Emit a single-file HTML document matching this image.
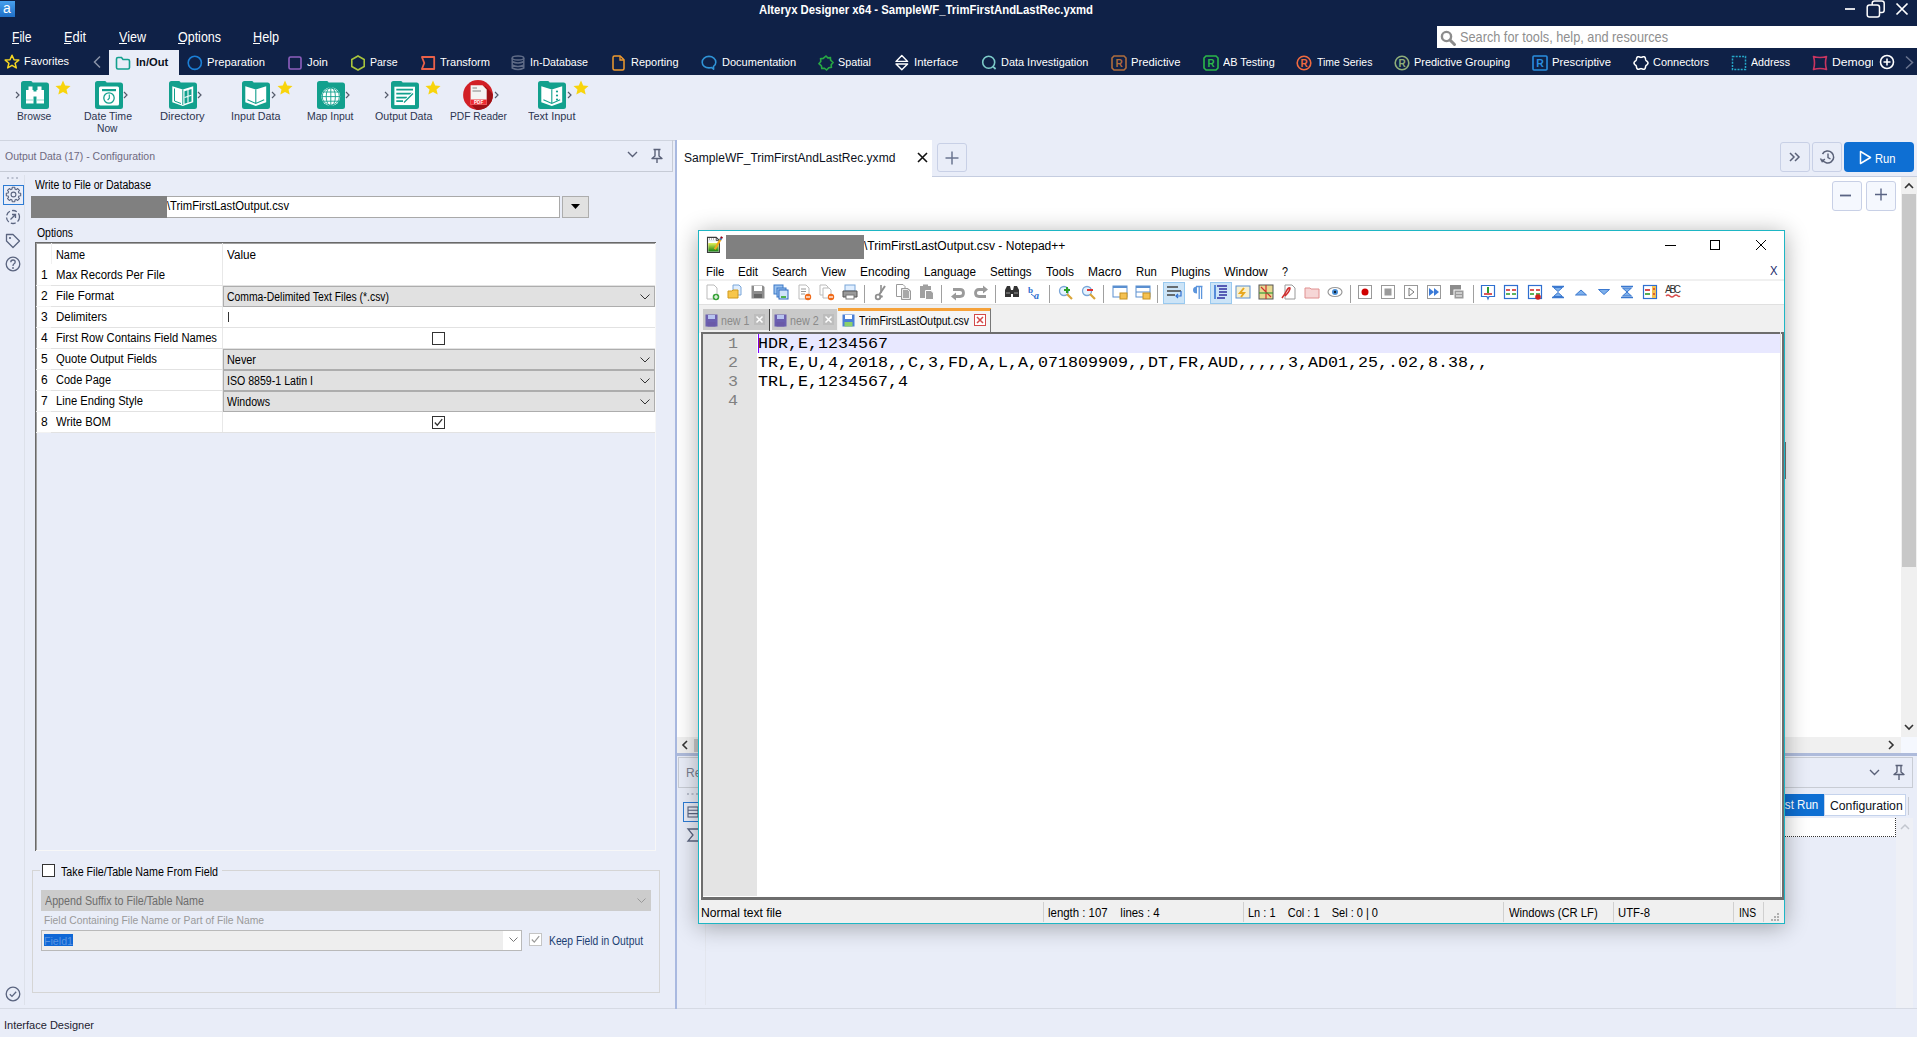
<!DOCTYPE html>
<html><head><meta charset="utf-8">
<style>
*{box-sizing:border-box;margin:0;padding:0}
html,body{width:1917px;height:1037px;overflow:hidden;background:#e9edf8;font-family:"Liberation Sans",sans-serif;font-size:12px;color:#000}
.a{position:absolute}
.t{position:absolute;white-space:pre;line-height:1}
svg{position:absolute;overflow:visible}
</style></head><body>
<div class="a" style="left:0px;top:0px;width:1917px;height:75px;background:#0f2147;"></div>
<div class="a" style="left:0px;top:1px;width:15px;height:16px;background:#2e84d8;background:linear-gradient(#47a0ee,#1f6fc6)"></div>
<div class="t" style="left:3px;top:1.15px;font-size:14px;color:#fff;font-weight:normal;font-family:'Liberation Sans',sans-serif;">a</div>
<div class="t" style="left:759px;top:3.00px;font-size:13px;color:#fff;font-weight:bold;font-family:'Liberation Sans',sans-serif;transform:scaleX(0.8723);transform-origin:0 0;">Alteryx Designer x64 - SampleWF_TrimFirstAndLastRec.yxmd</div>
<svg style="left:1843px;top:2px;" width="14" height="14" viewBox="0 0 14 14"><path d="M2 7H12" stroke="#fff" stroke-width="1.7"/></svg>
<svg style="left:1866px;top:0px;" width="20" height="20" viewBox="0 0 20 20"><rect x="1.2" y="5" width="12.3" height="12" rx="2.3" fill="none" stroke="#fff" stroke-width="1.5"/><path d="M6.2 5V3.3Q6.2 1 8.5 1H15.8Q18.2 1 18.2 3.3V10.2Q18.2 12.5 15.8 12.5H13.5" fill="none" stroke="#fff" stroke-width="1.5"/></svg>
<svg style="left:1895px;top:2px;" width="14" height="14" viewBox="0 0 14 14"><path d="M1.5 1.5L12.5 12.5M12.5 1.5L1.5 12.5" stroke="#fff" stroke-width="1.7"/></svg>
<div class="t" style="left:12px;top:30.15px;font-size:14px;color:#fff;font-weight:normal;font-family:'Liberation Sans',sans-serif;transform:scaleX(0.8643);transform-origin:0 0;">File</div>
<div class="a" style="left:12px;top:43px;width:7px;height:1px;background:#fff;"></div>
<div class="t" style="left:64px;top:30.15px;font-size:14px;color:#fff;font-weight:normal;font-family:'Liberation Sans',sans-serif;transform:scaleX(0.9202);transform-origin:0 0;">Edit</div>
<div class="a" style="left:64px;top:43px;width:7px;height:1px;background:#fff;"></div>
<div class="t" style="left:119px;top:30.15px;font-size:14px;color:#fff;font-weight:normal;font-family:'Liberation Sans',sans-serif;transform:scaleX(0.8972);transform-origin:0 0;">View</div>
<div class="a" style="left:119px;top:43px;width:8px;height:1px;background:#fff;"></div>
<div class="t" style="left:178px;top:30.15px;font-size:14px;color:#fff;font-weight:normal;font-family:'Liberation Sans',sans-serif;transform:scaleX(0.8912);transform-origin:0 0;">Options</div>
<div class="a" style="left:178px;top:43px;width:7px;height:1px;background:#fff;"></div>
<div class="t" style="left:253px;top:30.15px;font-size:14px;color:#fff;font-weight:normal;font-family:'Liberation Sans',sans-serif;transform:scaleX(0.9029);transform-origin:0 0;">Help</div>
<div class="a" style="left:253px;top:43px;width:7px;height:1px;background:#fff;"></div>
<div class="a" style="left:1437px;top:26px;width:480px;height:22px;background:#fff;"></div>
<svg style="left:1440px;top:30px;" width="17" height="16" viewBox="0 0 17 16"><circle cx="6.5" cy="6.5" r="4.6" fill="none" stroke="#8c8c8c" stroke-width="2.4"/><path d="M10 10L14.5 14.5" stroke="#8c8c8c" stroke-width="3" stroke-linecap="round"/></svg>
<div class="t" style="left:1460px;top:29.93px;font-size:14.5px;color:#8f8f8f;font-weight:normal;font-family:'Liberation Sans',sans-serif;transform:scaleX(0.8778);transform-origin:0 0;">Search for tools, help, and resources</div>
<div class="a" style="left:109px;top:50px;width:70px;height:25px;background:#e9edf8;"></div>
<div class="t" style="left:24px;top:56.07px;font-size:11.5px;color:#fff;font-weight:normal;font-family:'Liberation Sans',sans-serif;transform:scaleX(0.9514);transform-origin:0 0;">Favorites</div>
<div class="t" style="left:207px;top:57.07px;font-size:11.5px;color:#fff;font-weight:normal;font-family:'Liberation Sans',sans-serif;transform:scaleX(0.9753);transform-origin:0 0;">Preparation</div>
<div class="t" style="left:307px;top:57.07px;font-size:11.5px;color:#fff;font-weight:normal;font-family:'Liberation Sans',sans-serif;transform:scaleX(0.9948);transform-origin:0 0;">Join</div>
<div class="t" style="left:370px;top:57.07px;font-size:11.5px;color:#fff;font-weight:normal;font-family:'Liberation Sans',sans-serif;transform:scaleX(0.9152);transform-origin:0 0;">Parse</div>
<div class="t" style="left:440px;top:57.07px;font-size:11.5px;color:#fff;font-weight:normal;font-family:'Liberation Sans',sans-serif;transform:scaleX(0.9618);transform-origin:0 0;">Transform</div>
<div class="t" style="left:530px;top:57.07px;font-size:11.5px;color:#fff;font-weight:normal;font-family:'Liberation Sans',sans-serif;transform:scaleX(0.9257);transform-origin:0 0;">In-Database</div>
<div class="t" style="left:631px;top:57.07px;font-size:11.5px;color:#fff;font-weight:normal;font-family:'Liberation Sans',sans-serif;transform:scaleX(0.9524);transform-origin:0 0;">Reporting</div>
<div class="t" style="left:721.5px;top:57.07px;font-size:11.5px;color:#fff;font-weight:normal;font-family:'Liberation Sans',sans-serif;transform:scaleX(0.9579);transform-origin:0 0;">Documentation</div>
<div class="t" style="left:838px;top:57.07px;font-size:11.5px;color:#fff;font-weight:normal;font-family:'Liberation Sans',sans-serif;transform:scaleX(0.9382);transform-origin:0 0;">Spatial</div>
<div class="t" style="left:914.3px;top:57.07px;font-size:11.5px;color:#fff;font-weight:normal;font-family:'Liberation Sans',sans-serif;transform:scaleX(0.9855);transform-origin:0 0;">Interface</div>
<div class="t" style="left:1001.4px;top:57.07px;font-size:11.5px;color:#fff;font-weight:normal;font-family:'Liberation Sans',sans-serif;transform:scaleX(0.9494);transform-origin:0 0;">Data Investigation</div>
<div class="t" style="left:1131px;top:57.07px;font-size:11.5px;color:#fff;font-weight:normal;font-family:'Liberation Sans',sans-serif;transform:scaleX(0.9782);transform-origin:0 0;">Predictive</div>
<div class="t" style="left:1223px;top:57.07px;font-size:11.5px;color:#fff;font-weight:normal;font-family:'Liberation Sans',sans-serif;transform:scaleX(0.9440);transform-origin:0 0;">AB Testing</div>
<div class="t" style="left:1316.6px;top:57.07px;font-size:11.5px;color:#fff;font-weight:normal;font-family:'Liberation Sans',sans-serif;transform:scaleX(0.9094);transform-origin:0 0;">Time Series</div>
<div class="t" style="left:1414px;top:57.07px;font-size:11.5px;color:#fff;font-weight:normal;font-family:'Liberation Sans',sans-serif;transform:scaleX(0.9505);transform-origin:0 0;">Predictive Grouping</div>
<div class="t" style="left:1552px;top:57.07px;font-size:11.5px;color:#fff;font-weight:normal;font-family:'Liberation Sans',sans-serif;transform:scaleX(0.9821);transform-origin:0 0;">Prescriptive</div>
<div class="t" style="left:1653px;top:57.07px;font-size:11.5px;color:#fff;font-weight:normal;font-family:'Liberation Sans',sans-serif;transform:scaleX(0.9522);transform-origin:0 0;">Connectors</div>
<div class="t" style="left:1751px;top:57.07px;font-size:11.5px;color:#fff;font-weight:normal;font-family:'Liberation Sans',sans-serif;transform:scaleX(0.9244);transform-origin:0 0;">Address</div>
<div class="t" style="left:1832px;top:57.07px;font-size:11.5px;color:#fff;font-weight:normal;font-family:'Liberation Sans',sans-serif;transform:scaleX(1.0568);transform-origin:0 0;">Demogra</div>
<div class="a" style="left:1873px;top:50px;width:44px;height:25px;background:#0f2147;"></div>
<div class="t" style="left:136px;top:56.87px;font-size:11.5px;color:#0b1020;font-weight:bold;font-family:'Liberation Sans',sans-serif;transform:scaleX(0.9693);transform-origin:0 0;">In/Out</div>
<svg style="left:4px;top:54px;" width="16" height="15" viewBox="0 0 16 15"><path d="M8 1.2L10 5.8L14.8 6.1L11.1 9.2L12.3 13.9L8 11.3L3.7 13.9L4.9 9.2L1.2 6.1L6 5.8Z" fill="none" stroke="#f5d622" stroke-width="1.5" stroke-linejoin="round"/></svg>
<svg style="left:92px;top:55px;" width="10" height="14" viewBox="0 0 10 14"><path d="M8 1.5L2.5 7L8 12.5" fill="none" stroke="#8a93a8" stroke-width="1.5"/></svg>
<svg style="left:115px;top:56px;" width="16" height="14" viewBox="0 0 16 14"><path d="M1.5 3Q1.5 1.5 3 1.5H6.5L8 3.5H13Q14.5 3.5 14.5 5V11.5Q14.5 13 13 13H3Q1.5 13 1.5 11.5Z" fill="none" stroke="#13a08e" stroke-width="1.6"/></svg>
<svg style="left:187px;top:55px;" width="16" height="16" viewBox="0 0 16 16"><circle cx="7.8" cy="7.8" r="6.6" fill="none" stroke="#1b7fd6" stroke-width="1.6"/></svg>
<svg style="left:288px;top:56px;" width="14" height="14" viewBox="0 0 14 14"><rect x="1" y="1" width="12" height="12" rx="1.5" fill="none" stroke="#8f5fbf" stroke-width="1.6"/></svg>
<svg style="left:350px;top:55px;" width="16" height="16" viewBox="0 0 16 16"><path d="M8 1L14.2 4.5V11.5L8 15L1.8 11.5V4.5Z" fill="none" stroke="#a8c43c" stroke-width="1.6"/></svg>
<svg style="left:420px;top:56px;" width="16" height="15" viewBox="0 0 16 15"><path d="M1.9 1H14.2V13H1.9L4.3 7Z" fill="none" stroke="#ea6149" stroke-width="1.8" stroke-linejoin="round"/></svg>
<svg style="left:511px;top:55px;" width="14" height="16" viewBox="0 0 14 16"><ellipse cx="7" cy="3" rx="5.8" ry="2" fill="none" stroke="#5f6b86" stroke-width="1.5"/><path d="M1.2 3V13Q7 16 12.8 13V3M1.2 6.5Q7 9.5 12.8 6.5M1.2 10Q7 13 12.8 10" fill="none" stroke="#5f6b86" stroke-width="1.5"/></svg>
<svg style="left:612px;top:55px;" width="13" height="16" viewBox="0 0 13 16"><path d="M2.5 1H8.2L12 4.8V13.5Q12 15 10.5 15H2.5Q1 15 1 13.5V2.5Q1 1 2.5 1Z" fill="none" stroke="#f09a2e" stroke-width="1.5" stroke-linejoin="round"/><path d="M8 1.2V5H11.8" fill="none" stroke="#f09a2e" stroke-width="1.3"/></svg>
<svg style="left:701px;top:55px;" width="16" height="16" viewBox="0 0 16 16"><path d="M12.5 11.3C14.2 10.2 14.8 8.7 14.8 7.2C14.8 3.9 11.8 1.4 8 1.4S1.2 3.9 1.2 7.2S4.2 12.9 8 12.9C9 12.9 9.9 12.8 10.6 12.5L12.6 14.2Z" fill="none" stroke="#2f93d6" stroke-width="1.6" stroke-linejoin="round"/></svg>
<svg style="left:818px;top:55px;" width="16" height="16" viewBox="0 0 16 16"><path d="M8 1L9.8 2.8L12.4 2.6L12.6 5.2L15 7.5L13.2 9.8L13.4 12.4L10.8 12.8L8.6 15L6.4 13.2L3.8 13.4L3.4 10.8L1 8.6L2.8 6.4L2.6 3.8L5.2 3.4Z" fill="none" stroke="#27a744" stroke-width="1.6"/></svg>
<svg style="left:890px;top:50px;" width="24" height="24" viewBox="0 0 24 24"><path d="M11.8 5.6L17.6 11.4H6Z M6 14H17.6L11.8 19.8Z" fill="none" stroke="#fff" stroke-width="1.4" stroke-linejoin="round"/></svg>
<svg style="left:980px;top:50px;" width="24" height="24" viewBox="0 0 24 24"><circle cx="8.7" cy="12.3" r="6" fill="none" stroke="#7ccbc9" stroke-width="1.6"/><path d="M13 16.6L15.6 19" stroke="#7ccbc9" stroke-width="1.8"/></svg>
<svg style="left:1111px;top:55px;" width="16" height="16" viewBox="0 0 16 16"><path d="M3 1H13L15 3V13L13 15H3L1 13V3Z" fill="none" stroke="#b06d3e" stroke-width="1.6"/><text x="8" y="11.8" font-size="10" font-weight="bold" fill="#b06d3e" text-anchor="middle" font-family="Liberation Sans">R</text></svg>
<svg style="left:1203px;top:55px;" width="16" height="16" viewBox="0 0 16 16"><path d="M3 1H13L15 3V13L13 15H3L1 13V3Z" fill="none" stroke="#2bb84a" stroke-width="1.6"/><text x="8" y="11.8" font-size="10" font-weight="bold" fill="#2bb84a" text-anchor="middle" font-family="Liberation Sans">R</text></svg>
<svg style="left:1296px;top:55px;" width="16" height="16" viewBox="0 0 16 16"><circle cx="8" cy="8" r="6.8" fill="none" stroke="#f06a3f" stroke-width="1.6"/><text x="8" y="11.8" font-size="10" font-weight="bold" fill="#f06a3f" text-anchor="middle" font-family="Liberation Sans">R</text></svg>
<svg style="left:1394px;top:55px;" width="16" height="16" viewBox="0 0 16 16"><circle cx="8" cy="8" r="6.8" fill="none" stroke="#8fae7a" stroke-width="1.6"/><text x="8" y="11.8" font-size="10" font-weight="bold" fill="#8fae7a" text-anchor="middle" font-family="Liberation Sans">R</text></svg>
<svg style="left:1532px;top:55px;" width="16" height="16" viewBox="0 0 16 16"><rect x="1" y="1" width="14" height="14" rx="1" fill="none" stroke="#2a8ee0" stroke-width="1.6"/><text x="8" y="12" font-size="10.5" font-weight="bold" fill="#2a8ee0" text-anchor="middle" font-family="Liberation Sans">R</text></svg>
<svg style="left:1633px;top:55px;" width="16" height="16" viewBox="0 0 16 16"><path d="M15.00 8.00 L14.96 8.36 L14.83 8.72 L14.63 9.05 L14.37 9.35 L14.09 9.63 L13.79 9.88 L13.50 10.11 L13.24 10.33 L13.02 10.56 L12.85 10.80 L12.73 11.07 L12.64 11.37 L12.58 11.71 L12.52 12.07 L12.45 12.45 L12.36 12.84 L12.22 13.22 L12.04 13.55 L11.79 13.84 L11.50 14.06 L11.16 14.21 L10.79 14.27 L10.41 14.27 L10.01 14.20 L9.63 14.09 L9.26 13.95 L8.92 13.82 L8.60 13.70 L8.29 13.63 L8.00 13.60 L7.71 13.63 L7.40 13.70 L7.08 13.82 L6.74 13.95 L6.37 14.09 L5.99 14.20 L5.59 14.27 L5.21 14.27 L4.84 14.21 L4.50 14.06 L4.21 13.84 L3.96 13.55 L3.78 13.22 L3.64 12.84 L3.55 12.45 L3.48 12.07 L3.42 11.71 L3.36 11.37 L3.27 11.07 L3.15 10.80 L2.98 10.56 L2.76 10.33 L2.50 10.11 L2.21 9.88 L1.91 9.63 L1.63 9.35 L1.37 9.05 L1.17 8.72 L1.04 8.36 L1.00 8.00 L1.04 7.64 L1.17 7.28 L1.37 6.95 L1.63 6.65 L1.91 6.37 L2.21 6.12 L2.50 5.89 L2.76 5.67 L2.98 5.44 L3.15 5.20 L3.27 4.93 L3.36 4.63 L3.42 4.29 L3.48 3.93 L3.55 3.55 L3.64 3.16 L3.78 2.78 L3.96 2.45 L4.21 2.16 L4.50 1.94 L4.84 1.79 L5.21 1.73 L5.59 1.73 L5.99 1.80 L6.37 1.91 L6.74 2.05 L7.08 2.18 L7.40 2.30 L7.71 2.37 L8.00 2.40 L8.29 2.37 L8.60 2.30 L8.92 2.18 L9.26 2.05 L9.63 1.91 L10.01 1.80 L10.41 1.73 L10.79 1.73 L11.16 1.79 L11.50 1.94 L11.79 2.16 L12.04 2.45 L12.22 2.78 L12.36 3.16 L12.45 3.55 L12.52 3.93 L12.58 4.29 L12.64 4.63 L12.73 4.93 L12.85 5.20 L13.02 5.44 L13.24 5.67 L13.50 5.89 L13.79 6.12 L14.09 6.37 L14.37 6.65 L14.63 6.95 L14.83 7.28 L14.96 7.64 L15.00 8.00Z" fill="none" stroke="#fff" stroke-width="1.5"/></svg>
<svg style="left:1731px;top:55px;" width="16" height="16" viewBox="0 0 16 16"><rect x="1.5" y="1.5" width="13" height="13" fill="none" stroke="#25a9c9" stroke-width="1.5" stroke-dasharray="2 1.2"/></svg>
<svg style="left:1812px;top:55px;" width="16" height="16" viewBox="0 0 16 16"><path d="M1.5 1.5Q8 3.5 14.5 1.5Q12.5 8 14.5 14.5Q8 12.5 1.5 14.5Q3.5 8 1.5 1.5Z" fill="none" stroke="#c93560" stroke-width="1.6" stroke-linejoin="round"/></svg>
<svg style="left:1879px;top:54px;" width="16" height="16" viewBox="0 0 16 16"><circle cx="8" cy="8" r="6.5" fill="none" stroke="#fff" stroke-width="1.6"/><path d="M8 4.5V11.5M4.5 8H11.5" stroke="#fff" stroke-width="1.6"/></svg>
<svg style="left:1904px;top:55px;" width="12" height="15" viewBox="0 0 12 15"><path d="M2 1.5L8.5 7.5L2 13.5" fill="none" stroke="#6b7590" stroke-width="1.5"/></svg>
<div class="a" style="left:0px;top:75px;width:1917px;height:65px;background:#e9edf8;"></div>
<svg style="left:21px;top:81px;" width="28" height="28" viewBox="0 0 28 28"><path d="M0 2.5Q0 0 2.5 0H10Q11.2 0 11.6 1.5H25.5Q28 1.5 28 4V25.5Q28 28 25.5 28H2.5Q0 28 0 25.5Z" fill="#12a08d"/><path d="M7.5 5.5H11.5V9H12.5V22.5H5V9H7.5Z" fill="#fff"/><path d="M16.5 5.5H20.5V9H23V22.5H15.5V9H16.5Z" fill="#fff"/><rect x="12" y="10.5" width="4" height="5" fill="#fff"/><path d="M5 19H12.5M15.5 19H23" stroke="#8fd6cb" stroke-width="1.2"/></svg>
<svg style="left:55px;top:80px;" width="16" height="16" viewBox="0 0 16 16"><path d="M8 0.5L10.2 5.4L15.5 5.9L11.5 9.4L12.7 14.6L8 11.9L3.3 14.6L4.5 9.4L0.5 5.9L5.8 5.4Z" fill="#f8d40c"/></svg>
<svg style="left:15px;top:91px;" width="5" height="8" viewBox="0 0 5 8"><path d="M1 1L4 4L1 7" fill="none" stroke="#545b6b" stroke-width="1.2"/></svg>
<svg style="left:95px;top:81px;" width="28" height="28" viewBox="0 0 28 28"><path d="M0 2.5Q0 0 2.5 0H10Q11.2 0 11.6 1.5H25.5Q28 1.5 28 4V25.5Q28 28 25.5 28H2.5Q0 28 0 25.5Z" fill="#12a08d"/><rect x="4" y="5.5" width="20" height="19" rx="1.5" fill="#fff"/><rect x="7" y="8" width="14" height="2.2" fill="#12a08d"/><circle cx="14" cy="17" r="5.2" fill="none" stroke="#12a08d" stroke-width="1.3"/><path d="M14.3 13.6V17.2L12.6 19.2" stroke="#12a08d" stroke-width="1.1" fill="none"/></svg>
<svg style="left:123px;top:91px;" width="5" height="8" viewBox="0 0 5 8"><path d="M1 1L4 4L1 7" fill="none" stroke="#545b6b" stroke-width="1.2"/></svg>
<svg style="left:169px;top:81px;" width="28" height="28" viewBox="0 0 28 28"><path d="M0 2.5Q0 0 2.5 0H10Q11.2 0 11.6 1.5H25.5Q28 1.5 28 4V25.5Q28 28 25.5 28H2.5Q0 28 0 25.5Z" fill="#12a08d"/><path d="M3.3 5.2L13.8 8.5L24.2 5.2V21.3L13.8 25L3.3 21.3Z" fill="#fff"/><path d="M13.8 8.5V24" stroke="#12a08d" stroke-width="1"/><path d="M5.5 7.5V20L12 22.5" stroke="#12a08d" stroke-width="1" fill="none"/><path d="M15.5 10.2L22.5 8V20.5L15.5 22.8Z" fill="#12a08d"/><path d="M19 9V21.8M15.5 16.4L22.5 14.2" stroke="#fff" stroke-width="1.1"/></svg>
<svg style="left:197px;top:91px;" width="5" height="8" viewBox="0 0 5 8"><path d="M1 1L4 4L1 7" fill="none" stroke="#545b6b" stroke-width="1.2"/></svg>
<svg style="left:242px;top:81px;" width="28" height="28" viewBox="0 0 28 28"><path d="M0 2.5Q0 0 2.5 0H10Q11.2 0 11.6 1.5H25.5Q28 1.5 28 4V25.5Q28 28 25.5 28H2.5Q0 28 0 25.5Z" fill="#12a08d"/><path d="M3.3 5.2L13.8 8.5L24.2 5.2V21.3L13.8 25L3.3 21.3Z" fill="#fff"/><path d="M13.8 8.5V23M5.4 18.8L13.8 22.4L22.2 18.8" stroke="#12a08d" stroke-width="1.1" fill="none"/></svg>
<svg style="left:271px;top:91px;" width="5" height="8" viewBox="0 0 5 8"><path d="M1 1L4 4L1 7" fill="none" stroke="#545b6b" stroke-width="1.2"/></svg>
<svg style="left:277px;top:80px;" width="16" height="16" viewBox="0 0 16 16"><path d="M8 0.5L10.2 5.4L15.5 5.9L11.5 9.4L12.7 14.6L8 11.9L3.3 14.6L4.5 9.4L0.5 5.9L5.8 5.4Z" fill="#f8d40c"/></svg>
<svg style="left:317px;top:81px;" width="28" height="28" viewBox="0 0 28 28"><path d="M0 2.5Q0 0 2.5 0H10Q11.2 0 11.6 1.5H25.5Q28 1.5 28 4V25.5Q28 28 25.5 28H2.5Q0 28 0 25.5Z" fill="#12a08d"/><circle cx="13.8" cy="15.6" r="9.4" fill="#fff"/><g stroke="#12a08d" stroke-width="0.9" fill="none"><path d="M4.4 15.6H23.2M13.8 6.2V25M5.6 11H22M5.6 20.2H22"/><ellipse cx="13.8" cy="15.6" rx="4.6" ry="9.4"/><circle cx="13.8" cy="15.6" r="8.6"/></g></svg>
<svg style="left:345px;top:91px;" width="5" height="8" viewBox="0 0 5 8"><path d="M1 1L4 4L1 7" fill="none" stroke="#545b6b" stroke-width="1.2"/></svg>
<svg style="left:391px;top:81px;" width="28" height="28" viewBox="0 0 28 28"><path d="M0 2.5Q0 0 2.5 0H10Q11.2 0 11.6 1.5H25.5Q28 1.5 28 4V25.5Q28 28 25.5 28H2.5Q0 28 0 25.5Z" fill="#12a08d"/><rect x="3.4" y="5.7" width="20.6" height="18.4" fill="#fff"/><path d="M5.3 8.6H22M5.3 12.6H21M5.3 16.6H16M5.3 20.1H12" stroke="#12a08d" stroke-width="1.8"/><path d="M13 21.5L22 12.5" stroke="#fff" stroke-width="3"/><path d="M13 21.5L22 12.5" stroke="#12a08d" stroke-width="1.2"/></svg>
<svg style="left:384px;top:91px;" width="5" height="8" viewBox="0 0 5 8"><path d="M1 1L4 4L1 7" fill="none" stroke="#545b6b" stroke-width="1.2"/></svg>
<svg style="left:425px;top:80px;" width="16" height="16" viewBox="0 0 16 16"><path d="M8 0.5L10.2 5.4L15.5 5.9L11.5 9.4L12.7 14.6L8 11.9L3.3 14.6L4.5 9.4L0.5 5.9L5.8 5.4Z" fill="#f8d40c"/></svg>
<svg style="left:463px;top:80px;" width="30" height="30" viewBox="0 0 30 30"><defs><clipPath id="pc"><circle cx="15" cy="15" r="14.9"/></clipPath></defs><circle cx="15" cy="15" r="14.9" fill="#d21f26"/><path d="M22 6L40 24L22 40L8 24Z" fill="#9e1015" clip-path="url(#pc)"/><path d="M7.6 5.2H19.5L23.7 9.4V24.7H7.6Z" fill="#f4f4f4"/><path d="M9.5 8H14M9.5 11H18" stroke="#777" stroke-width=".9"/><rect x="7.6" y="19.5" width="16.1" height="5.2" fill="#ef2a30"/><text x="15.6" y="23.8" font-size="4.6" font-weight="bold" fill="#fff" text-anchor="middle" font-family="Liberation Sans">PDF</text></svg>
<svg style="left:494px;top:91px;" width="5" height="8" viewBox="0 0 5 8"><path d="M1 1L4 4L1 7" fill="none" stroke="#545b6b" stroke-width="1.2"/></svg>
<svg style="left:538px;top:81px;" width="28" height="28" viewBox="0 0 28 28"><path d="M0 2.5Q0 0 2.5 0H10Q11.2 0 11.6 1.5H25.5Q28 1.5 28 4V25.5Q28 28 25.5 28H2.5Q0 28 0 25.5Z" fill="#12a08d"/><path d="M3.3 5.2L13.8 8.5L24.2 5.2V21.3L13.8 25L3.3 21.3Z" fill="#fff"/><path d="M13.8 8.5V23M5.4 18.8L13.8 22.4L22.2 18.8" stroke="#12a08d" stroke-width="1.1" fill="none"/><circle cx="19" cy="10.5" r="1.1" fill="#12a08d"/><circle cx="19" cy="14.5" r="1.1" fill="#12a08d"/><circle cx="19" cy="18.5" r="1.1" fill="#12a08d"/></svg>
<svg style="left:567px;top:91px;" width="5" height="8" viewBox="0 0 5 8"><path d="M1 1L4 4L1 7" fill="none" stroke="#545b6b" stroke-width="1.2"/></svg>
<svg style="left:573px;top:80px;" width="16" height="16" viewBox="0 0 16 16"><path d="M8 0.5L10.2 5.4L15.5 5.9L11.5 9.4L12.7 14.6L8 11.9L3.3 14.6L4.5 9.4L0.5 5.9L5.8 5.4Z" fill="#f8d40c"/></svg>
<div class="t" style="left:16.7px;top:110.77px;font-size:11.5px;color:#2d3550;font-weight:normal;font-family:'Liberation Sans',sans-serif;transform:scaleX(0.8942);transform-origin:0 0;">Browse</div>
<div class="t" style="left:159.6px;top:110.77px;font-size:11.5px;color:#2d3550;font-weight:normal;font-family:'Liberation Sans',sans-serif;transform:scaleX(0.9714);transform-origin:0 0;">Directory</div>
<div class="t" style="left:231px;top:110.77px;font-size:11.5px;color:#2d3550;font-weight:normal;font-family:'Liberation Sans',sans-serif;transform:scaleX(0.9326);transform-origin:0 0;">Input Data</div>
<div class="t" style="left:306.5px;top:110.77px;font-size:11.5px;color:#2d3550;font-weight:normal;font-family:'Liberation Sans',sans-serif;transform:scaleX(0.9090);transform-origin:0 0;">Map Input</div>
<div class="t" style="left:375px;top:110.77px;font-size:11.5px;color:#2d3550;font-weight:normal;font-family:'Liberation Sans',sans-serif;transform:scaleX(0.9256);transform-origin:0 0;">Output Data</div>
<div class="t" style="left:450px;top:110.77px;font-size:11.5px;color:#2d3550;font-weight:normal;font-family:'Liberation Sans',sans-serif;transform:scaleX(0.8917);transform-origin:0 0;">PDF Reader</div>
<div class="t" style="left:527.5px;top:110.77px;font-size:11.5px;color:#2d3550;font-weight:normal;font-family:'Liberation Sans',sans-serif;transform:scaleX(0.9524);transform-origin:0 0;">Text Input</div>
<div class="t" style="left:83.5px;top:110.77px;font-size:11.5px;color:#2d3550;font-weight:normal;font-family:'Liberation Sans',sans-serif;transform:scaleX(0.9156);transform-origin:0 0;">Date Time</div>
<div class="t" style="left:97px;top:123.27px;font-size:11.5px;color:#2d3550;font-weight:normal;font-family:'Liberation Sans',sans-serif;transform:scaleX(0.8907);transform-origin:0 0;">Now</div>
<div class="a" style="left:0px;top:140px;width:676px;height:1px;background:#cfd4df;"></div>
<div class="t" style="left:5px;top:150.77px;font-size:11.5px;color:#6f6a7f;font-weight:normal;font-family:'Liberation Sans',sans-serif;transform:scaleX(0.9131);transform-origin:0 0;">Output Data (17) - Configuration</div>
<svg style="left:627px;top:151px;" width="11" height="7" viewBox="0 0 11 7"><path d="M1 1L5.5 5.5L10 1" fill="none" stroke="#5a6178" stroke-width="1.4"/></svg>
<svg style="left:650px;top:148px;" width="14" height="16" viewBox="0 0 14 16"><path d="M3.5 1.5H10.5M5 1.5V8L2 10.5H12L9 8V1.5M7 10.5V15" fill="none" stroke="#5a6178" stroke-width="1.4" stroke-linejoin="round"/></svg>
<div class="a" style="left:0px;top:171px;width:672px;height:1px;background:#c6cbd6;"></div>
<div class="a" style="left:672px;top:140px;width:1px;height:32px;background:#c6cbd6;"></div>
<div class="a" style="left:24px;top:175px;width:1px;height:830px;background:#dde1ea;"></div>
<svg style="left:6px;top:176px;" width="14" height="4" viewBox="0 0 14 4"><path d="M1 2H3M5.5 2H7.5M10 2H12" stroke="#8b93a6" stroke-width="1.2"/></svg>
<div class="a" style="left:3px;top:185px;width:21px;height:20px;border:1px solid #2d7bd4"></div>
<svg style="left:5px;top:186px;" width="17" height="17" viewBox="0 0 17 17"><path d="M13.90 7.01 L15.69 7.24 L15.69 9.76 L13.90 9.99 L13.37 11.26 L14.47 12.70 L12.70 14.47 L11.26 13.37 L9.99 13.90 L9.76 15.69 L7.24 15.69 L7.01 13.90 L5.74 13.37 L4.30 14.47 L2.53 12.70 L3.63 11.26 L3.10 9.99 L1.31 9.76 L1.31 7.24 L3.10 7.01 L3.63 5.74 L2.53 4.30 L4.30 2.53 L5.74 3.63 L7.01 3.10 L7.24 1.31 L9.76 1.31 L9.99 3.10 L11.26 3.63 L12.70 2.53 L14.47 4.30 L13.37 5.74Z" fill="none" stroke="#5b6580" stroke-width="1.1" stroke-linejoin="round"/><circle cx="8.5" cy="8.5" r="2.4" fill="none" stroke="#5b6580" stroke-width="1.1"/></svg>
<svg style="left:5px;top:209px;" width="16" height="16" viewBox="0 0 16 16"><circle cx="8" cy="8" r="6.5" fill="none" stroke="#5b6580" stroke-width="1.3" stroke-dasharray="5 2.2"/><path d="M5.5 10.5L10.5 5.5M7 5.5H10.5V9" fill="none" stroke="#5b6580" stroke-width="1.3"/></svg>
<svg style="left:5px;top:233px;" width="16" height="16" viewBox="0 0 16 16"><path d="M1.5 1.5H8L14.5 8L8 14.5L1.5 8Z" fill="none" stroke="#5b6580" stroke-width="1.3" stroke-linejoin="round"/><circle cx="5" cy="5" r="1.1" fill="#5b6580"/></svg>
<svg style="left:5px;top:256px;" width="16" height="16" viewBox="0 0 16 16"><circle cx="8" cy="8" r="6.8" fill="none" stroke="#5b6580" stroke-width="1.3"/><path d="M5.8 6.2Q5.8 4 8 4Q10.2 4 10.2 6Q10.2 7.3 8.8 8Q8 8.5 8 10" fill="none" stroke="#5b6580" stroke-width="1.3"/><circle cx="8" cy="12" r="0.9" fill="#5b6580"/></svg>
<svg style="left:5px;top:986px;" width="16" height="16" viewBox="0 0 16 16"><circle cx="8" cy="8" r="6.8" fill="none" stroke="#5b6580" stroke-width="1.3"/><path d="M4.8 8.2L7 10.4L11.2 5.8" fill="none" stroke="#5b6580" stroke-width="1.3"/></svg>
<div class="t" style="left:35px;top:179.34px;font-size:12px;color:#000;font-weight:normal;font-family:'Liberation Sans',sans-serif;transform:scaleX(0.8755);transform-origin:0 0;">Write to File or Database</div>
<div class="a" style="left:31px;top:196px;width:529px;height:22px;background:#fff;border:1px solid #a9a9a9"></div>
<div class="a" style="left:31px;top:196px;width:136px;height:22px;background:#808080;"></div>
<div class="t" style="left:167px;top:199.84px;font-size:12px;color:#000;font-weight:normal;font-family:'Liberation Sans',sans-serif;transform:scaleX(0.9367);transform-origin:0 0;">\TrimFirstLastOutput.csv</div>
<div class="a" style="left:562px;top:196px;width:27px;height:22px;background:#e1e1e1;border:1px solid #adadad"></div>
<svg style="left:571px;top:204px;" width="9" height="5" viewBox="0 0 9 5"><path d="M0 0H9L4.5 5Z" fill="#000"/></svg>
<div class="t" style="left:37px;top:227.34px;font-size:12px;color:#000;font-weight:normal;font-family:'Liberation Sans',sans-serif;transform:scaleX(0.8704);transform-origin:0 0;">Options</div>
<div class="a" style="left:35px;top:242px;width:621px;height:609px;background:#e9edf8;"></div>
<div class="a" style="left:36px;top:243px;width:619px;height:189px;background:#fff;"></div>
<div class="a" style="left:35px;top:242px;width:621px;height:1px;background:#696969;"></div>
<div class="a" style="left:35px;top:242px;width:1px;height:609px;background:#696969;"></div>
<div class="a" style="left:36px;top:243px;width:1px;height:607px;background:#a0a0a0;"></div>
<div class="a" style="left:36px;top:243px;width:619px;height:1px;background:#a0a0a0;"></div>
<div class="a" style="left:655px;top:243px;width:1px;height:608px;background:#f7f7f7;"></div>
<div class="a" style="left:36px;top:850px;width:620px;height:1px;background:#f7f7f7;"></div>
<div class="a" style="left:51px;top:243px;width:1px;height:21px;background:#f0f0f0;"></div>
<div class="a" style="left:222px;top:243px;width:1px;height:189px;background:#e8e8e8;"></div>
<div class="t" style="left:56px;top:248.84px;font-size:12px;color:#000;font-weight:normal;font-family:'Liberation Sans',sans-serif;transform:scaleX(0.9058);transform-origin:0 0;">Name</div>
<div class="t" style="left:227px;top:248.84px;font-size:12px;color:#000;font-weight:normal;font-family:'Liberation Sans',sans-serif;transform:scaleX(0.9727);transform-origin:0 0;">Value</div>
<div class="a" style="left:51px;top:285px;width:604px;height:1px;background:#e2e2e2;"></div>
<div class="a" style="left:36px;top:285px;width:15px;height:1px;background:#f2f2f2;"></div>
<div class="t" style="left:41px;top:268.84px;font-size:12px;color:#000;font-weight:normal;font-family:'Liberation Sans',sans-serif;">1</div>
<div class="t" style="left:56px;top:268.84px;font-size:12px;color:#000;font-weight:normal;font-family:'Liberation Sans',sans-serif;transform:scaleX(0.9447);transform-origin:0 0;">Max Records Per File</div>
<div class="a" style="left:51px;top:306px;width:604px;height:1px;background:#e2e2e2;"></div>
<div class="a" style="left:36px;top:306px;width:15px;height:1px;background:#f2f2f2;"></div>
<div class="t" style="left:41px;top:289.84px;font-size:12px;color:#000;font-weight:normal;font-family:'Liberation Sans',sans-serif;">2</div>
<div class="t" style="left:56px;top:289.84px;font-size:12px;color:#000;font-weight:normal;font-family:'Liberation Sans',sans-serif;transform:scaleX(0.9557);transform-origin:0 0;">File Format</div>
<div class="a" style="left:223px;top:286px;width:432px;height:21px;background:#e1e1e1;border:1px solid #adadad"></div>
<div class="t" style="left:227px;top:290.84px;font-size:12px;color:#000;font-weight:normal;font-family:'Liberation Sans',sans-serif;transform:scaleX(0.8656);transform-origin:0 0;">Comma-Delimited Text Files (*.csv)</div>
<svg style="left:640px;top:294px;" width="10" height="6" viewBox="0 0 10 6"><path d="M0.5 0.5L5 5L9.5 0.5" fill="none" stroke="#333" stroke-width="1"/></svg>
<div class="a" style="left:51px;top:327px;width:604px;height:1px;background:#e2e2e2;"></div>
<div class="a" style="left:36px;top:327px;width:15px;height:1px;background:#f2f2f2;"></div>
<div class="t" style="left:41px;top:310.84px;font-size:12px;color:#000;font-weight:normal;font-family:'Liberation Sans',sans-serif;">3</div>
<div class="t" style="left:56px;top:310.84px;font-size:12px;color:#000;font-weight:normal;font-family:'Liberation Sans',sans-serif;transform:scaleX(0.9561);transform-origin:0 0;">Delimiters</div>
<div class="a" style="left:228px;top:312px;width:1px;height:10px;background:#333;"></div>
<div class="a" style="left:51px;top:348px;width:604px;height:1px;background:#e2e2e2;"></div>
<div class="a" style="left:36px;top:348px;width:15px;height:1px;background:#f2f2f2;"></div>
<div class="t" style="left:41px;top:331.84px;font-size:12px;color:#000;font-weight:normal;font-family:'Liberation Sans',sans-serif;">4</div>
<div class="t" style="left:56px;top:331.84px;font-size:12px;color:#000;font-weight:normal;font-family:'Liberation Sans',sans-serif;transform:scaleX(0.9357);transform-origin:0 0;">First Row Contains Field Names</div>
<div class="a" style="left:432px;top:332px;width:13px;height:13px;background:#fff;border:1px solid #333"></div>
<div class="a" style="left:51px;top:369px;width:604px;height:1px;background:#e2e2e2;"></div>
<div class="a" style="left:36px;top:369px;width:15px;height:1px;background:#f2f2f2;"></div>
<div class="t" style="left:41px;top:352.84px;font-size:12px;color:#000;font-weight:normal;font-family:'Liberation Sans',sans-serif;">5</div>
<div class="t" style="left:56px;top:352.84px;font-size:12px;color:#000;font-weight:normal;font-family:'Liberation Sans',sans-serif;transform:scaleX(0.9405);transform-origin:0 0;">Quote Output Fields</div>
<div class="a" style="left:223px;top:349px;width:432px;height:21px;background:#e1e1e1;border:1px solid #adadad"></div>
<div class="t" style="left:227px;top:353.84px;font-size:12px;color:#000;font-weight:normal;font-family:'Liberation Sans',sans-serif;transform:scaleX(0.9058);transform-origin:0 0;">Never</div>
<svg style="left:640px;top:357px;" width="10" height="6" viewBox="0 0 10 6"><path d="M0.5 0.5L5 5L9.5 0.5" fill="none" stroke="#333" stroke-width="1"/></svg>
<div class="a" style="left:51px;top:390px;width:604px;height:1px;background:#e2e2e2;"></div>
<div class="a" style="left:36px;top:390px;width:15px;height:1px;background:#f2f2f2;"></div>
<div class="t" style="left:41px;top:373.84px;font-size:12px;color:#000;font-weight:normal;font-family:'Liberation Sans',sans-serif;">6</div>
<div class="t" style="left:56px;top:373.84px;font-size:12px;color:#000;font-weight:normal;font-family:'Liberation Sans',sans-serif;transform:scaleX(0.9160);transform-origin:0 0;">Code Page</div>
<div class="a" style="left:223px;top:370px;width:432px;height:21px;background:#e1e1e1;border:1px solid #adadad"></div>
<div class="t" style="left:227px;top:374.84px;font-size:12px;color:#000;font-weight:normal;font-family:'Liberation Sans',sans-serif;transform:scaleX(0.8829);transform-origin:0 0;">ISO 8859-1 Latin I</div>
<svg style="left:640px;top:378px;" width="10" height="6" viewBox="0 0 10 6"><path d="M0.5 0.5L5 5L9.5 0.5" fill="none" stroke="#333" stroke-width="1"/></svg>
<div class="a" style="left:51px;top:411px;width:604px;height:1px;background:#e2e2e2;"></div>
<div class="a" style="left:36px;top:411px;width:15px;height:1px;background:#f2f2f2;"></div>
<div class="t" style="left:41px;top:394.84px;font-size:12px;color:#000;font-weight:normal;font-family:'Liberation Sans',sans-serif;">7</div>
<div class="t" style="left:56px;top:394.84px;font-size:12px;color:#000;font-weight:normal;font-family:'Liberation Sans',sans-serif;transform:scaleX(0.9314);transform-origin:0 0;">Line Ending Style</div>
<div class="a" style="left:223px;top:391px;width:432px;height:21px;background:#e1e1e1;border:1px solid #adadad"></div>
<div class="t" style="left:227px;top:395.84px;font-size:12px;color:#000;font-weight:normal;font-family:'Liberation Sans',sans-serif;transform:scaleX(0.8832);transform-origin:0 0;">Windows</div>
<svg style="left:640px;top:399px;" width="10" height="6" viewBox="0 0 10 6"><path d="M0.5 0.5L5 5L9.5 0.5" fill="none" stroke="#333" stroke-width="1"/></svg>
<div class="a" style="left:51px;top:432px;width:604px;height:1px;background:#e2e2e2;"></div>
<div class="a" style="left:36px;top:432px;width:15px;height:1px;background:#f2f2f2;"></div>
<div class="t" style="left:41px;top:415.84px;font-size:12px;color:#000;font-weight:normal;font-family:'Liberation Sans',sans-serif;">8</div>
<div class="t" style="left:56px;top:415.84px;font-size:12px;color:#000;font-weight:normal;font-family:'Liberation Sans',sans-serif;transform:scaleX(0.9409);transform-origin:0 0;">Write BOM</div>
<div class="a" style="left:432px;top:416px;width:13px;height:13px;background:#fff;border:1px solid #333"></div>
<svg style="left:434px;top:418px;" width="9" height="9" viewBox="0 0 9 9"><path d="M0.8 4.5L3.3 7.2L8.2 1.2" fill="none" stroke="#333" stroke-width="1.3"/></svg>
<div class="a" style="left:32px;top:870px;width:628px;height:123px;border:1px solid #d5d5d5"></div>
<div class="a" style="left:40px;top:862px;width:182px;height:14px;background:#e9edf8;"></div>
<div class="a" style="left:42px;top:864px;width:13px;height:13px;background:#fff;border:1px solid #333"></div>
<div class="t" style="left:61px;top:865.84px;font-size:12px;color:#000;font-weight:normal;font-family:'Liberation Sans',sans-serif;transform:scaleX(0.8917);transform-origin:0 0;">Take File/Table Name From Field</div>
<div class="a" style="left:41px;top:890px;width:610px;height:21px;background:#cccccc;"></div>
<div class="t" style="left:45px;top:894.84px;font-size:12px;color:#6d6d6d;font-weight:normal;font-family:'Liberation Sans',sans-serif;transform:scaleX(0.8938);transform-origin:0 0;">Append Suffix to File/Table Name</div>
<svg style="left:637px;top:898px;" width="9" height="5" viewBox="0 0 9 5"><path d="M0.5 0.5L4.5 4.5L8.5 0.5" fill="none" stroke="#999" stroke-width="1"/></svg>
<div class="t" style="left:44px;top:915.27px;font-size:11.5px;color:#9a9a9a;font-weight:normal;font-family:'Liberation Sans',sans-serif;transform:scaleX(0.8987);transform-origin:0 0;">Field Containing File Name or Part of File Name</div>
<div class="a" style="left:41px;top:930px;width:481px;height:21px;background:#eeeeee;border:1px solid #b9b9b9"></div>
<div class="a" style="left:503px;top:931px;width:18px;height:19px;background:#fff;"></div>
<svg style="left:509px;top:937px;" width="9" height="5" viewBox="0 0 9 5"><path d="M0.5 0.5L4.5 4.5L8.5 0.5" fill="none" stroke="#777" stroke-width="1"/></svg>
<div class="a" style="left:44px;top:934px;width:29px;height:12px;background:#0f68d6;"></div>
<div class="t" style="left:44px;top:935.69px;font-size:11px;color:#5b95e0;font-weight:normal;font-family:'Liberation Sans',sans-serif;transform:scaleX(0.9677);transform-origin:0 0;">Field1</div>
<div class="a" style="left:529px;top:933px;width:13px;height:13px;background:#fff;border:1px solid #c5c5c5"></div>
<svg style="left:531px;top:935px;" width="9" height="9" viewBox="0 0 9 9"><path d="M0.8 4.5L3.3 7.2L8.2 1.2" fill="none" stroke="#9a9a9a" stroke-width="1.2"/></svg>
<div class="t" style="left:548.5px;top:934.84px;font-size:12px;color:#1c3f72;font-weight:normal;font-family:'Liberation Sans',sans-serif;transform:scaleX(0.8592);transform-origin:0 0;">Keep Field in Output</div>
<div class="a" style="left:0px;top:1008px;width:1917px;height:1px;background:#d6dae4;"></div>
<div class="a" style="left:675px;top:140px;width:2px;height:869px;background:#a9b9e0;"></div>
<div class="t" style="left:4.4px;top:1020.27px;font-size:11.5px;color:#1f2330;font-weight:normal;font-family:'Liberation Sans',sans-serif;transform:scaleX(0.9578);transform-origin:0 0;">Interface Designer</div>
<div class="a" style="left:677px;top:140px;width:1240px;height:37px;background:#e9edf8;"></div>
<div class="a" style="left:677px;top:176px;width:1240px;height:1px;background:#c5cde0;"></div>
<div class="a" style="left:677px;top:140px;width:255px;height:37px;background:#fff;"></div>
<div class="t" style="left:684px;top:152.42px;font-size:12.5px;color:#0b1020;font-weight:normal;font-family:'Liberation Sans',sans-serif;transform:scaleX(0.9652);transform-origin:0 0;">SampleWF_TrimFirstAndLastRec.yxmd</div>
<svg style="left:917px;top:152px;" width="11" height="11" viewBox="0 0 11 11"><path d="M1 1L10 10M10 1L1 10" stroke="#111" stroke-width="1.6"/></svg>
<div class="a" style="left:937px;top:143px;width:30px;height:29px;border:1px solid #c8d0e6;border-radius:3px"></div>
<svg style="left:944px;top:150px;" width="16" height="16" viewBox="0 0 16 16"><path d="M8 1.5V14.5M1.5 8H14.5" stroke="#6b7590" stroke-width="1.5"/></svg>
<div class="a" style="left:1780px;top:142px;width:30px;height:30px;border:1px solid #c8d0e6;border-radius:3px"></div>
<svg style="left:1789px;top:151px;" width="12" height="12" viewBox="0 0 12 12"><path d="M1 2L5 6L1 10M6 2L10 6L6 10" fill="none" stroke="#5a6178" stroke-width="1.5"/></svg>
<div class="a" style="left:1812px;top:142px;width:30px;height:30px;border:1px solid #c8d0e6;border-radius:3px"></div>
<svg style="left:1819px;top:149px;" width="16" height="16" viewBox="0 0 16 16"><path d="M3.2 10.5A6 6 0 1 0 3.5 5" fill="none" stroke="#5a6178" stroke-width="1.5"/><path d="M1.5 9.5L3.2 12.5L5.8 10" fill="none" stroke="#5a6178" stroke-width="1.5"/><path d="M9 4.5V8.5L11.5 10" fill="none" stroke="#5a6178" stroke-width="1.4"/></svg>
<div class="a" style="left:1844px;top:142px;width:70px;height:30px;background:#0e6fd3;border-radius:4px"></div>
<svg style="left:1859px;top:150px;" width="13" height="15" viewBox="0 0 13 15"><path d="M1.5 1.5L11.5 7.5L1.5 13.5Z" fill="none" stroke="#fff" stroke-width="1.5" stroke-linejoin="round"/></svg>
<div class="t" style="left:1875.3px;top:151.50px;font-size:13px;color:#fff;font-weight:normal;font-family:'Liberation Sans',sans-serif;transform:scaleX(0.8592);transform-origin:0 0;">Run</div>
<div class="a" style="left:677px;top:177px;width:1224px;height:560px;background:#fff;"></div>
<div class="a" style="left:1832px;top:181px;width:30px;height:30px;background:#f5f8fe;border:1px solid #c8d0e6;border-radius:3px"></div>
<svg style="left:1840px;top:194px;" width="14" height="3" viewBox="0 0 14 3"><path d="M0 1.5H11" stroke="#5a6484" stroke-width="1.8"/></svg>
<div class="a" style="left:1866px;top:181px;width:30px;height:30px;background:#f5f8fe;border:1px solid #c8d0e6;border-radius:3px"></div>
<svg style="left:1874px;top:188px;" width="14" height="14" viewBox="0 0 14 14"><path d="M7 0.5V12.5M1 6.5H13" stroke="#5a6484" stroke-width="1.4"/></svg>
<div class="a" style="left:1785px;top:442px;width:1px;height:37px;background:#777;"></div>
<div class="a" style="left:1901px;top:177px;width:16px;height:560px;background:#f0f0f0;"></div>
<div class="a" style="left:1902px;top:194px;width:14px;height:373px;background:#c8c8c8;"></div>
<svg style="left:1904px;top:183px;" width="10" height="6" viewBox="0 0 10 6"><path d="M1 5L5 1L9 5" fill="none" stroke="#333" stroke-width="1.6"/></svg>
<svg style="left:1904px;top:724px;" width="10" height="6" viewBox="0 0 10 6"><path d="M1 1L5 5L9 1" fill="none" stroke="#333" stroke-width="1.6"/></svg>
<div class="a" style="left:677px;top:737px;width:1224px;height:16px;background:#f0f0f0;"></div>
<div class="a" style="left:1901px;top:737px;width:16px;height:16px;background:#f5f8fe;"></div>
<div class="a" style="left:694px;top:739px;width:1091px;height:13px;background:#c8c8c8;"></div>
<svg style="left:681px;top:740px;" width="7" height="10" viewBox="0 0 7 10"><path d="M6 1L2 5L6 9" fill="none" stroke="#333" stroke-width="1.6"/></svg>
<svg style="left:1888px;top:740px;" width="7" height="10" viewBox="0 0 7 10"><path d="M1 1L5 5L1 9" fill="none" stroke="#333" stroke-width="1.6"/></svg>
<div class="a" style="left:677px;top:753px;width:1240px;height:3px;background:#aebbdb;"></div>
<div class="a" style="left:677px;top:756px;width:1240px;height:252px;background:#e9edf8;"></div>
<div class="a" style="left:678px;top:757px;width:1235px;height:31px;border:1px solid #c8ccd4"></div>
<div class="t" style="left:685.5px;top:767.34px;font-size:12px;color:#7a7f8f;font-weight:normal;font-family:'Liberation Sans',sans-serif;transform:scaleX(0.9996);transform-origin:0 0;">Results</div>
<svg style="left:1869px;top:769px;" width="11" height="7" viewBox="0 0 11 7"><path d="M1 1L5.5 5.5L10 1" fill="none" stroke="#5a6178" stroke-width="1.4"/></svg>
<svg style="left:1892px;top:764px;" width="14" height="17" viewBox="0 0 14 17"><path d="M3.5 1.5H10.5M5 1.5V8L2 10.5H12L9 8V1.5M7 10.5V16" fill="none" stroke="#5a6178" stroke-width="1.4" stroke-linejoin="round"/></svg>
<svg style="left:686px;top:792px;" width="14" height="4" viewBox="0 0 14 4"><path d="M1 2H3M5.5 2H7.5M10 2H12" stroke="#8b93a6" stroke-width="1.2"/></svg>
<div class="a" style="left:683px;top:802px;width:20px;height:20px;border:1px solid #2d7bd4"></div>
<svg style="left:687px;top:806px;" width="12" height="12" viewBox="0 0 12 12"><rect x="1" y="1" width="10" height="10" fill="none" stroke="#5b6580" stroke-width="1.1"/><path d="M1 4.3H11M1 7.6H11" stroke="#5b6580" stroke-width="1.1"/></svg>
<svg style="left:687px;top:828px;" width="12" height="14" viewBox="0 0 12 14"><path d="M11 1H1L6 7L1 13H11" fill="none" stroke="#5b6580" stroke-width="1.3"/></svg>
<div class="a" style="left:705px;top:800px;width:1px;height:205px;background:#e3e6ee;"></div>
<div class="a" style="left:1740px;top:794px;width:84px;height:22px;background:#0e6fd3;"></div>
<div class="t" style="left:1772px;top:799.42px;font-size:12.5px;color:#fff;font-weight:normal;font-family:'Liberation Sans',sans-serif;transform:scaleX(0.9254);transform-origin:0 0;">Last Run</div>
<div class="a" style="left:1824px;top:794px;width:82px;height:22px;background:#fff;border:1px solid #c5d3ec"></div>
<div class="t" style="left:1829.6px;top:799.92px;font-size:12.5px;color:#0b1020;font-weight:normal;font-family:'Liberation Sans',sans-serif;transform:scaleX(0.9777);transform-origin:0 0;">Configuration</div>
<div class="a" style="left:1908px;top:797px;width:1px;height:18px;background:#c8ccd4;"></div>
<div class="a" style="left:706px;top:818px;width:1190px;height:19px;background:#fff;border-bottom:1px dotted #333;border-right:1px dotted #333"></div>
<div class="a" style="left:1896px;top:818px;width:17px;height:190px;background:#eef0f6;"></div>
<svg style="left:1900px;top:824px;" width="10" height="6" viewBox="0 0 10 6"><path d="M1 5L5 1L9 5" fill="none" stroke="#c2c6ce" stroke-width="1.5"/></svg>
<div class="a" style="left:698px;top:230px;width:1087px;height:694px;background:#fff;border:1px solid #1eb6c4;box-shadow:0 3px 22px rgba(0,0,0,.32)"></div>
<svg style="left:706px;top:236px;" width="18" height="18" viewBox="0 0 18 18"><defs><linearGradient id="ng" x1="0" y1="0" x2="0" y2="1"><stop offset="0" stop-color="#e4f05a"/><stop offset="1" stop-color="#12800e"/></linearGradient></defs><path d="M1.5 1.4H10.2L13.4 4.6V16.4H1.5Z" fill="#fff" stroke="#3a3a3a" stroke-width="1.1"/><path d="M10.2 1.4V4.6H13.4" fill="none" stroke="#3a3a3a" stroke-width=".9"/><path d="M3 3H4M5 3H6M7 3H8" stroke="#666" stroke-width=".9"/><path d="M2.5 4.8H9.5" stroke="#bcd" stroke-width=".6"/><rect x="2.3" y="7" width="10.3" height="8.5" fill="url(#ng)"/><path d="M8.8 13.2L14.6 3.2" stroke="#f2a818" stroke-width="2.2"/><path d="M14.2 3.9L15.3 2" stroke="#4a78b0" stroke-width="2.2"/><path d="M15.2 2.2L16 0.8" stroke="#9a0010" stroke-width="2.2"/></svg>
<div class="a" style="left:726px;top:235px;width:138px;height:24px;background:#808080;"></div>
<div class="t" style="left:864.3px;top:240.42px;font-size:12.5px;color:#000;font-weight:normal;font-family:'Liberation Sans',sans-serif;transform:scaleX(0.9653);transform-origin:0 0;">\TrimFirstLastOutput.csv - Notepad++</div>
<div class="a" style="left:1665px;top:245px;width:11px;height:1px;background:#000;"></div>
<div class="a" style="left:1710px;top:240px;width:10px;height:10px;border:1px solid #000"></div>
<svg style="left:1756px;top:240px;" width="10" height="10" viewBox="0 0 10 10"><path d="M0 0L10 10M10 0L0 10" stroke="#000" stroke-width="1"/></svg>
<div class="t" style="left:706px;top:265.62px;font-size:12.5px;color:#000;font-weight:normal;font-family:'Liberation Sans',sans-serif;transform:scaleX(0.9129);transform-origin:0 0;">File</div>
<div class="t" style="left:738px;top:265.62px;font-size:12.5px;color:#000;font-weight:normal;font-family:'Liberation Sans',sans-serif;transform:scaleX(0.9282);transform-origin:0 0;">Edit</div>
<div class="t" style="left:772px;top:265.62px;font-size:12.5px;color:#000;font-weight:normal;font-family:'Liberation Sans',sans-serif;transform:scaleX(0.8836);transform-origin:0 0;">Search</div>
<div class="t" style="left:821px;top:265.62px;font-size:12.5px;color:#000;font-weight:normal;font-family:'Liberation Sans',sans-serif;transform:scaleX(0.9302);transform-origin:0 0;">View</div>
<div class="t" style="left:860px;top:265.62px;font-size:12.5px;color:#000;font-weight:normal;font-family:'Liberation Sans',sans-serif;transform:scaleX(0.9592);transform-origin:0 0;">Encoding</div>
<div class="t" style="left:924px;top:265.62px;font-size:12.5px;color:#000;font-weight:normal;font-family:'Liberation Sans',sans-serif;transform:scaleX(0.9348);transform-origin:0 0;">Language</div>
<div class="t" style="left:990px;top:265.62px;font-size:12.5px;color:#000;font-weight:normal;font-family:'Liberation Sans',sans-serif;transform:scaleX(0.9209);transform-origin:0 0;">Settings</div>
<div class="t" style="left:1046px;top:265.62px;font-size:12.5px;color:#000;font-weight:normal;font-family:'Liberation Sans',sans-serif;transform:scaleX(0.9593);transform-origin:0 0;">Tools</div>
<div class="t" style="left:1088.4px;top:265.62px;font-size:12.5px;color:#000;font-weight:normal;font-family:'Liberation Sans',sans-serif;transform:scaleX(0.9616);transform-origin:0 0;">Macro</div>
<div class="t" style="left:1136px;top:265.62px;font-size:12.5px;color:#000;font-weight:normal;font-family:'Liberation Sans',sans-serif;transform:scaleX(0.9068);transform-origin:0 0;">Run</div>
<div class="t" style="left:1170.8px;top:265.62px;font-size:12.5px;color:#000;font-weight:normal;font-family:'Liberation Sans',sans-serif;transform:scaleX(0.9561);transform-origin:0 0;">Plugins</div>
<div class="t" style="left:1224px;top:265.62px;font-size:12.5px;color:#000;font-weight:normal;font-family:'Liberation Sans',sans-serif;transform:scaleX(0.9827);transform-origin:0 0;">Window</div>
<div class="t" style="left:1281.7px;top:265.62px;font-size:12.5px;color:#000;font-weight:normal;font-family:'Liberation Sans',sans-serif;transform:scaleX(0.8629);transform-origin:0 0;">?</div>
<div class="t" style="left:1770px;top:265.34px;font-size:12px;color:#1a2a6c;font-weight:normal;font-family:'Liberation Sans',sans-serif;transform:scaleX(0.9357);transform-origin:0 0;">X</div>
<div class="a" style="left:699px;top:279px;width:1085px;height:2px;background:#f0f0f0;"></div>
<svg style="left:704px;top:284px;" width="16" height="16" viewBox="0 0 16 16"><path d="M3 1H10L13 4V15H3Z" fill="#fff" stroke="#bbb"/><circle cx="12" cy="13" r="3.3" fill="#3aa33a"/><path d="M12 11V15M10 13H14" stroke="#fff" stroke-width="1.2"/></svg>
<svg style="left:727px;top:284px;" width="16" height="16" viewBox="0 0 16 16"><path d="M6 1H12L14 3V11H6Z" fill="#dfeeff" stroke="#7aa6d8"/><path d="M1 7H5L6 6H11V14H1Z" fill="#f7c64a" stroke="#d19a1c"/></svg>
<svg style="left:750px;top:284px;" width="16" height="16" viewBox="0 0 16 16"><path d="M1.5 1.5H13L14.5 3V14.5H1.5Z" fill="#8d8d8d"/><rect x="4" y="2" width="8" height="5" fill="#fff"/><rect x="4" y="10" width="8" height="4" fill="#666"/></svg>
<svg style="left:773px;top:284px;" width="16" height="16" viewBox="0 0 16 16"><rect x="1" y="1" width="9" height="9" fill="#9cc3ef" stroke="#3a78c8"/><rect x="4" y="4" width="9" height="9" fill="#9cc3ef" stroke="#3a78c8"/><rect x="6" y="6" width="9" height="9" fill="#cfe3fa" stroke="#2f6ac0"/><rect x="8" y="12" width="5" height="2" fill="#4fb34f"/></svg>
<svg style="left:796px;top:284px;" width="16" height="16" viewBox="0 0 16 16"><path d="M3 1H10L13 4V15H3Z" fill="#fff" stroke="#bbb"/><path d="M5 5H10M5 7.5H10M5 10H9" stroke="#999"/><circle cx="12" cy="13" r="3.2" fill="#f06a1a"/><path d="M10 13H14" stroke="#fff" stroke-width="1.3"/></svg>
<svg style="left:819px;top:284px;" width="16" height="16" viewBox="0 0 16 16"><path d="M1 1H7L9 3V11H1Z" fill="#fff" stroke="#bbb"/><path d="M4 4H10L12 6V14H4Z" fill="#fff" stroke="#bbb"/><circle cx="12" cy="13" r="3.2" fill="#f06a1a"/><path d="M10 13H14" stroke="#fff" stroke-width="1.3"/></svg>
<svg style="left:842px;top:284px;" width="16" height="16" viewBox="0 0 16 16"><rect x="3" y="1" width="10" height="6" fill="#dfeeff" stroke="#7aa6d8"/><path d="M1 7H15V13H1Z" fill="#9a9a9a" stroke="#555"/><rect x="4" y="11" width="8" height="4" fill="#fff" stroke="#777"/></svg>
<div class="a" style="left:864px;top:285px;width:1px;height:18px;background:#a0a0a0;"></div>
<svg style="left:873px;top:284px;" width="16" height="16" viewBox="0 0 16 16"><path d="M8 1V9" stroke="#8f8f8f" stroke-width="1.6"/><path d="M12 2L6 11" stroke="#8f8f8f" stroke-width="2"/><circle cx="5" cy="13" r="2.3" fill="none" stroke="#8f8f8f" stroke-width="1.8"/><circle cx="8.5" cy="12.5" r="1.3" fill="#8f8f8f"/></svg>
<svg style="left:896px;top:284px;" width="16" height="16" viewBox="0 0 16 16"><path d="M0.5 0.5H7L9 2.5V12.5H0.5Z" fill="#fff" stroke="#9a9a9a"/><path d="M5.5 4.5H12L14.5 7V15.5H5.5Z" fill="#a0a0a0" stroke="#9a9a9a"/><path d="M6.5 5.5H11.5L13.5 7.5V14.5H6.5Z" fill="#a8a8a8" stroke="#fff" stroke-width=".8"/></svg>
<svg style="left:919px;top:284px;" width="16" height="16" viewBox="0 0 16 16"><path d="M1 2H4V0.5H9V2H12V14H1Z" fill="#a0a0a0"/><path d="M6.5 6.5H12L14.5 9V15.5H6.5Z" fill="#a0a0a0" stroke="#fff" stroke-width="1"/></svg>
<div class="a" style="left:941px;top:285px;width:1px;height:18px;background:#a0a0a0;"></div>
<svg style="left:950px;top:285px;" width="16" height="16" viewBox="0 0 16 16"><path d="M3 4.5H10Q13.5 4.5 13.5 8Q13.5 11.5 10 11.5H5" fill="none" stroke="#9a9a9a" stroke-width="2.8"/><path d="M1 11.5L6 7.5V15.5Z" fill="#9a9a9a"/></svg>
<svg style="left:973px;top:285px;" width="16" height="16" viewBox="0 0 16 16"><path d="M11 4.5H6Q2.5 4.5 2.5 8Q2.5 11.5 6 11.5H13" fill="none" stroke="#9a9a9a" stroke-width="2.8"/><path d="M15 4.5L10 0.5V8.5Z" fill="#9a9a9a"/></svg>
<div class="a" style="left:995px;top:285px;width:1px;height:18px;background:#a0a0a0;"></div>
<svg style="left:1004px;top:284px;" width="16" height="16" viewBox="0 0 16 16"><path d="M1 6L3 2H6L7 6V13H1Z M9 6L10 2H13L15 6V13H9Z" fill="#333"/><rect x="6" y="6" width="4" height="4" fill="#333"/><path d="M2 9H6M10 9H14" stroke="#999"/></svg>
<svg style="left:1027px;top:284px;" width="16" height="16" viewBox="0 0 16 16"><text x="1" y="9" font-size="9" font-weight="bold" fill="#2f6fd0" font-family="Liberation Serif">b</text><text x="7" y="15" font-size="10" font-weight="bold" font-style="italic" fill="#2f6fd0" font-family="Liberation Serif">a</text><path d="M4 10L8 13" stroke="#2f6fd0"/></svg>
<div class="a" style="left:1049px;top:285px;width:1px;height:18px;background:#a0a0a0;"></div>
<svg style="left:1058px;top:284px;" width="16" height="16" viewBox="0 0 16 16"><circle cx="6" cy="7" r="4.5" fill="#e5f3ff" stroke="#7aa6d8" stroke-width="1.3"/><path d="M9 10L14 15" stroke="#d9a53a" stroke-width="2.2"/><path d="M9 3V9M6 6H12" stroke="#2aa02a" stroke-width="2"/></svg>
<svg style="left:1081px;top:284px;" width="16" height="16" viewBox="0 0 16 16"><circle cx="6" cy="7" r="4.5" fill="#e5f3ff" stroke="#7aa6d8" stroke-width="1.3"/><path d="M9 10L14 15" stroke="#d9a53a" stroke-width="2.2"/><path d="M6 6H12" stroke="#e03030" stroke-width="2"/></svg>
<div class="a" style="left:1103px;top:285px;width:1px;height:18px;background:#a0a0a0;"></div>
<svg style="left:1112px;top:284px;" width="16" height="16" viewBox="0 0 16 16"><rect x="1" y="2" width="14" height="11" fill="#fff" stroke="#5a8fd0"/><rect x="1" y="2" width="14" height="2" fill="#5a8fd0"/><rect x="8" y="9" width="7" height="6" fill="#f4c152" stroke="#c89220"/></svg>
<svg style="left:1135px;top:284px;" width="16" height="16" viewBox="0 0 16 16"><rect x="1" y="2" width="14" height="11" fill="#fff" stroke="#5a8fd0"/><rect x="1" y="2" width="14" height="2" fill="#5a8fd0"/><path d="M1 8H15" stroke="#5a8fd0"/><rect x="8" y="9" width="7" height="6" fill="#f4c152" stroke="#c89220"/></svg>
<div class="a" style="left:1157px;top:285px;width:1px;height:18px;background:#a0a0a0;"></div>
<div class="a" style="left:1163px;top:282px;width:22px;height:22px;background:#cce4f7;border:1px solid #99c9ef"></div>
<svg style="left:1166px;top:284px;" width="16" height="16" viewBox="0 0 16 16"><path d="M1 3H12M1 7H15M1 11H9" stroke="#444" stroke-width="1.3"/><path d="M15 7V12H10M12 10L10 12L12 14" fill="none" stroke="#2f6fd0" stroke-width="1.2"/></svg>
<svg style="left:1189px;top:284px;" width="16" height="16" viewBox="0 0 16 16"><path d="M7 2.5H13.5M10.2 2.5V15M12.6 2.5V15" stroke="#5c95dc" stroke-width="1.3"/><path d="M8 2.5Q4 2.5 4 6Q4 9.5 8 9.5Z" fill="#5c95dc"/></svg>
<div class="a" style="left:1210px;top:282px;width:22px;height:22px;background:#cce4f7;border:1px solid #99c9ef"></div>
<svg style="left:1213px;top:284px;" width="16" height="16" viewBox="0 0 16 16"><path d="M2 1V15" stroke="#2f6fd0" stroke-width="1.5"/><path d="M4 2H14M6 5H14M6 8H14M6 11H14M4 14H12" stroke="#2f2fa0" stroke-width="1.3"/></svg>
<svg style="left:1235px;top:284px;" width="16" height="16" viewBox="0 0 16 16"><rect x="1" y="2" width="14" height="12" fill="#f7f0d0" stroke="#5a8fd0"/><path d="M9 4L5 9H9L6 13" stroke="#e8a820" stroke-width="2" fill="none"/></svg>
<svg style="left:1258px;top:284px;" width="16" height="16" viewBox="0 0 16 16"><rect x="1" y="1" width="14" height="14" fill="#e8d890" stroke="#555"/><path d="M3 3L13 13M8 1V15" stroke="#d03030" stroke-width="1.2"/><path d="M1 9H15" stroke="#3a9a3a" stroke-width="1.2"/></svg>
<svg style="left:1281px;top:284px;" width="16" height="16" viewBox="0 0 16 16"><path d="M4 1H11L14 4V15H4Z" fill="#fff" stroke="#999"/><path d="M1 14Q4 10 6 6Q8 3 9 4Q9 7 4 12" fill="none" stroke="#d03030" stroke-width="1.6"/></svg>
<svg style="left:1304px;top:284px;" width="16" height="16" viewBox="0 0 16 16"><path d="M1 4H6L7 5H15V14H1Z" fill="#f6d6d6" stroke="#e09090"/></svg>
<svg style="left:1327px;top:284px;" width="16" height="16" viewBox="0 0 16 16"><ellipse cx="8" cy="8" rx="7" ry="4.5" fill="#fff" stroke="#999" stroke-width="1.2"/><circle cx="8" cy="8" r="3" fill="#4a90d8"/><circle cx="8" cy="8" r="1.2" fill="#123"/></svg>
<div class="a" style="left:1350px;top:285px;width:1px;height:18px;background:#a0a0a0;"></div>
<svg style="left:1357px;top:284px;" width="16" height="16" viewBox="0 0 16 16"><rect x="1.5" y="1.5" width="13" height="13" fill="#fff" stroke="#999"/><circle cx="8" cy="8" r="3.5" fill="#d00000"/></svg>
<svg style="left:1380px;top:284px;" width="16" height="16" viewBox="0 0 16 16"><rect x="1.5" y="1.5" width="13" height="13" fill="#fff" stroke="#999"/><rect x="4.5" y="4.5" width="7" height="7" fill="#9a9a9a"/></svg>
<svg style="left:1403px;top:284px;" width="16" height="16" viewBox="0 0 16 16"><rect x="1.5" y="1.5" width="13" height="13" fill="#fff" stroke="#999"/><path d="M6 4L11 8L6 12Z" fill="#fff" stroke="#777"/></svg>
<svg style="left:1426px;top:284px;" width="16" height="16" viewBox="0 0 16 16"><rect x="1.5" y="1.5" width="13" height="13" fill="#fff" stroke="#999"/><path d="M3 4L8 8L3 12Z M8 4L13 8L8 12Z" fill="#3a7ad8"/></svg>
<svg style="left:1449px;top:284px;" width="16" height="16" viewBox="0 0 16 16"><rect x="1" y="1" width="11" height="10" fill="#8c8c8c"/><rect x="5" y="6" width="10" height="9" fill="#9a9a9a" stroke="#fff"/><path d="M7 9H13M7 12H13" stroke="#fff"/></svg>
<div class="a" style="left:1473px;top:285px;width:1px;height:18px;background:#a0a0a0;"></div>
<svg style="left:1480px;top:284px;" width="16" height="16" viewBox="0 0 16 16"><path d="M1.5 1.5H14.5V12.5H9L8 15L7 12.5H1.5Z" fill="#fff" stroke="#2f6fd0" stroke-width="1.2"/><path d="M8 3V9" stroke="#2a9a2a" stroke-width="2"/><path d="M4 10H12" stroke="#d02020" stroke-width="1.5"/></svg>
<svg style="left:1503px;top:284px;" width="16" height="16" viewBox="0 0 16 16"><rect x="1.5" y="1.5" width="13" height="13" fill="#fff" stroke="#2f6fd0" stroke-width="1.2"/><path d="M3 6H7M9 6H13" stroke="#d02020" stroke-width="1.6"/><path d="M3 10H7M9 10H13" stroke="#2a9a2a" stroke-width="1.6"/></svg>
<svg style="left:1527px;top:284px;" width="16" height="16" viewBox="0 0 16 16"><rect x="1.5" y="1.5" width="13" height="13" fill="#fff" stroke="#2f6fd0" stroke-width="1.2"/><path d="M3 6H7M9 6H13" stroke="#d02020" stroke-width="1.6"/><path d="M3 10H7M9 10H13" stroke="#2a9a2a" stroke-width="1.6"/><circle cx="11" cy="13" r="2.8" fill="#d02020"/></svg>
<svg style="left:1550px;top:284px;" width="16" height="16" viewBox="0 0 16 16"><path d="M2 2.5H14M2 13.5H14" stroke="#3a78cf" stroke-width="1.4"/><path d="M3.5 3.5L8 7.5L12.5 3.5Z M3.5 12.5L8 8.5L12.5 12.5Z" fill="#7eb0ec" stroke="#3a78cf" stroke-width="1"/></svg>
<svg style="left:1573px;top:284px;" width="16" height="16" viewBox="0 0 16 16"><path d="M2.5 11L8 6L13.5 11Z" fill="#7eb0ec" stroke="#3a78cf"/></svg>
<svg style="left:1596px;top:284px;" width="16" height="16" viewBox="0 0 16 16"><path d="M2.5 5.5L8 10.5L13.5 5.5Z" fill="#7eb0ec" stroke="#3a78cf"/></svg>
<svg style="left:1619px;top:284px;" width="16" height="16" viewBox="0 0 16 16"><path d="M2 2.5H14M2 13.5H14" stroke="#3a78cf" stroke-width="1.4"/><path d="M3.5 4L8 8L12.5 4Z M3.5 12L8 8L12.5 12Z" fill="#7eb0ec" stroke="#3a78cf" stroke-width="1"/></svg>
<svg style="left:1642px;top:284px;" width="16" height="16" viewBox="0 0 16 16"><rect x="1.5" y="1.5" width="13" height="13" fill="#fff" stroke="#2f6fd0" stroke-width="1.2"/><rect x="10" y="2" width="4" height="12" fill="#f4c152"/><path d="M3 6H8" stroke="#d02020" stroke-width="1.6"/><path d="M3 10H8" stroke="#2a9a2a" stroke-width="1.6"/><path d="M12 4V6M12 9V11" stroke="#d02020" stroke-width="1.2"/></svg>
<svg style="left:1665px;top:283px;" width="16" height="16" viewBox="0 0 16 16"><text x="0" y="10" font-size="10" fill="#333" font-family="Liberation Sans" textLength="16">ABC</text><path d="M1 13Q3 11 5 13Q7 15 9 13Q11 11 13 13Q14 14 15 13" fill="none" stroke="#d84a4a" stroke-width="1.5"/></svg>
<div class="a" style="left:699px;top:304px;width:1085px;height:1px;background:#e0e0e0;"></div>
<div class="a" style="left:699px;top:305px;width:1085px;height:28px;background:#f0f0f0;"></div>
<div class="a" style="left:703px;top:309px;width:66px;height:21px;background:#c9c9c9;"></div>
<div class="a" style="left:769px;top:309px;width:1px;height:22px;background:#444;"></div>
<div class="a" style="left:772px;top:309px;width:65px;height:21px;background:#c9c9c9;"></div>
<svg style="left:705px;top:314px;" width="13" height="13" viewBox="0 0 13 13"><rect x="0.5" y="0.5" width="12" height="12" fill="#6b5fb0"/><rect x="3" y="1" width="7" height="4" fill="#b8c4f0"/><rect x="2.5" y="8" width="8" height="4.5" fill="#6a5aa8"/></svg>
<svg style="left:774px;top:314px;" width="13" height="13" viewBox="0 0 13 13"><rect x="0.5" y="0.5" width="12" height="12" fill="#6b5fb0"/><rect x="3" y="1" width="7" height="4" fill="#b8c4f0"/><rect x="2.5" y="8" width="8" height="4.5" fill="#6a5aa8"/></svg>
<div class="t" style="left:720.7px;top:315.42px;font-size:12.5px;color:#8a8a8a;font-weight:normal;font-family:'Liberation Sans',sans-serif;transform:scaleX(0.8483);transform-origin:0 0;">new 1</div>
<div class="t" style="left:789.7px;top:315.42px;font-size:12.5px;color:#8a8a8a;font-weight:normal;font-family:'Liberation Sans',sans-serif;transform:scaleX(0.8603);transform-origin:0 0;">new 2</div>
<svg style="left:754px;top:314px;" width="11" height="11" viewBox="0 0 11 11"><rect x="0" y="0" width="11" height="11" fill="#bdbdbd"/><path d="M2.5 2.5L8.5 8.5M8.5 2.5L2.5 8.5" stroke="#fff" stroke-width="1.5"/></svg>
<svg style="left:823px;top:314px;" width="11" height="11" viewBox="0 0 11 11"><rect x="0" y="0" width="11" height="11" fill="#bdbdbd"/><path d="M2.5 2.5L8.5 8.5M8.5 2.5L2.5 8.5" stroke="#fff" stroke-width="1.5"/></svg>
<div class="a" style="left:838px;top:308px;width:153px;height:24px;background:#f5f5f5;"></div>
<div class="a" style="left:838px;top:308px;width:153px;height:3px;background:#f6a23a;"></div>
<div class="a" style="left:990px;top:309px;width:1px;height:23px;background:#777;"></div>
<svg style="left:842px;top:314px;" width="13" height="13" viewBox="0 0 13 13"><rect x="0.5" y="0.5" width="12" height="12" fill="#4a7fd8"/><rect x="3" y="1" width="7" height="4" fill="#fff"/><rect x="2.5" y="8" width="8" height="4.5" fill="#8bd06a"/></svg>
<div class="t" style="left:859px;top:315.34px;font-size:12px;color:#000;font-weight:normal;font-family:'Liberation Sans',sans-serif;transform:scaleX(0.8667);transform-origin:0 0;">TrimFirstLastOutput.csv</div>
<svg style="left:974px;top:314px;" width="12" height="12" viewBox="0 0 12 12"><rect x="0.5" y="0.5" width="11" height="11" fill="#fff" stroke="#d34a4a"/><path d="M3 3L9 9M9 3L3 9" stroke="#d34a4a" stroke-width="1.5"/></svg>
<div class="a" style="left:701px;top:332px;width:1083px;height:2px;background:#6d6d6d;"></div>
<div class="a" style="left:701px;top:332px;width:2px;height:568px;background:#6d6d6d;"></div>
<div class="a" style="left:1780px;top:332px;width:1px;height:568px;background:#e0e0e0;"></div>
<div class="a" style="left:1782px;top:332px;width:2px;height:568px;background:#6d6d6d;"></div>
<div class="a" style="left:703px;top:334px;width:54px;height:562px;background:#e4e4e4;"></div>
<div class="a" style="left:757px;top:334px;width:1023px;height:562px;background:#fff;"></div>
<div class="a" style="left:758px;top:334px;width:1022px;height:19px;background:#e8e8ff;"></div>
<div class="a" style="left:758px;top:334px;width:1px;height:19px;background:#8000ff;"></div>
<div class="a" style="left:701px;top:897px;width:1083px;height:3px;background:#6d6d6d;"></div>
<div class="t" style="left:727.5px;top:337.03px;font-size:14.5px;color:#808080;font-weight:normal;font-family:'Liberation Mono',monospace;transform:scaleX(1.1490);transform-origin:0 0;">1</div>
<div class="t" style="left:757.6px;top:337.03px;font-size:14.5px;color:#000;font-weight:normal;font-family:'Liberation Mono',monospace;transform:scaleX(1.1492);transform-origin:0 0;">HDR,E,1234567</div>
<div class="t" style="left:727.5px;top:356.03px;font-size:14.5px;color:#808080;font-weight:normal;font-family:'Liberation Mono',monospace;transform:scaleX(1.1490);transform-origin:0 0;">2</div>
<div class="t" style="left:757.6px;top:356.03px;font-size:14.5px;color:#000;font-weight:normal;font-family:'Liberation Mono',monospace;transform:scaleX(1.1492);transform-origin:0 0;">TR,E,U,4,2018,,C,3,FD,A,L,A,071809909,,DT,FR,AUD,,,,,3,AD01,25,.02,8.38,,</div>
<div class="t" style="left:727.5px;top:375.03px;font-size:14.5px;color:#808080;font-weight:normal;font-family:'Liberation Mono',monospace;transform:scaleX(1.1490);transform-origin:0 0;">3</div>
<div class="t" style="left:757.6px;top:375.03px;font-size:14.5px;color:#000;font-weight:normal;font-family:'Liberation Mono',monospace;transform:scaleX(1.1492);transform-origin:0 0;">TRL,E,1234567,4</div>
<div class="t" style="left:727.5px;top:394.03px;font-size:14.5px;color:#808080;font-weight:normal;font-family:'Liberation Mono',monospace;transform:scaleX(1.1490);transform-origin:0 0;">4</div>
<div class="a" style="left:699px;top:900px;width:1085px;height:23px;background:#f0f0f0;"></div>
<div class="t" style="left:701.4px;top:907.02px;font-size:12.5px;color:#000;font-weight:normal;font-family:'Liberation Sans',sans-serif;transform:scaleX(0.9693);transform-origin:0 0;">Normal text file</div>
<div class="t" style="left:1048.3px;top:907.02px;font-size:12.5px;color:#000;font-weight:normal;font-family:'Liberation Sans',sans-serif;transform:scaleX(0.9132);transform-origin:0 0;">length : 107    lines : 4</div>
<div class="t" style="left:1248px;top:907.02px;font-size:12.5px;color:#000;font-weight:normal;font-family:'Liberation Sans',sans-serif;transform:scaleX(0.8797);transform-origin:0 0;">Ln : 1    Col : 1    Sel : 0 | 0</div>
<div class="t" style="left:1508.6px;top:907.02px;font-size:12.5px;color:#000;font-weight:normal;font-family:'Liberation Sans',sans-serif;transform:scaleX(0.8994);transform-origin:0 0;">Windows (CR LF)</div>
<div class="t" style="left:1618px;top:907.02px;font-size:12.5px;color:#000;font-weight:normal;font-family:'Liberation Sans',sans-serif;transform:scaleX(0.9034);transform-origin:0 0;">UTF-8</div>
<div class="t" style="left:1738.6px;top:907.02px;font-size:12.5px;color:#000;font-weight:normal;font-family:'Liberation Sans',sans-serif;transform:scaleX(0.8252);transform-origin:0 0;">INS</div>
<div class="a" style="left:1043px;top:902px;width:1px;height:20px;background:#d0d0d0;"></div>
<div class="a" style="left:1243px;top:902px;width:1px;height:20px;background:#d0d0d0;"></div>
<div class="a" style="left:1503px;top:902px;width:1px;height:20px;background:#d0d0d0;"></div>
<div class="a" style="left:1613px;top:902px;width:1px;height:20px;background:#d0d0d0;"></div>
<div class="a" style="left:1733px;top:902px;width:1px;height:20px;background:#d0d0d0;"></div>
<div class="a" style="left:1763px;top:902px;width:1px;height:20px;background:#d0d0d0;"></div>
<svg style="left:1770px;top:912px;" width="10" height="9" viewBox="0 0 10 9"><g fill="#b0b0b0"><rect x="7" y="1" width="2" height="2"/><rect x="4" y="4" width="2" height="2"/><rect x="7" y="4" width="2" height="2"/><rect x="1" y="7" width="2" height="2"/><rect x="4" y="7" width="2" height="2"/><rect x="7" y="7" width="2" height="2"/></g></svg>
</body></html>
